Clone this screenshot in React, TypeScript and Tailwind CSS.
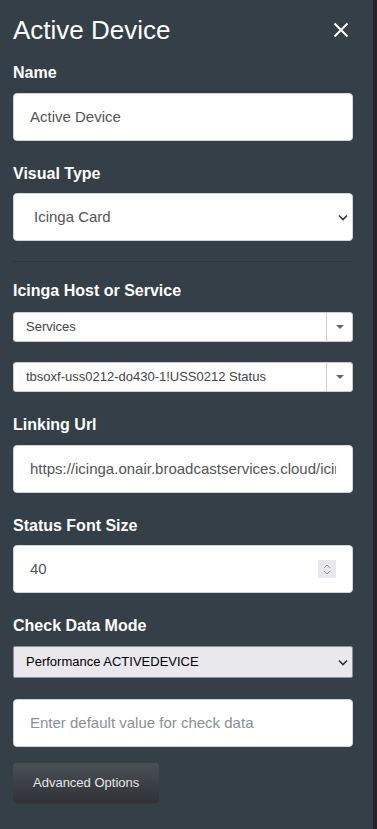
import React from 'react';

const font = { fontFamily: '"Liberation Sans", Arial, sans-serif' };

const Label: React.FC<{ children: React.ReactNode }> = ({ children }) => (
  <div className="text-[16px] font-bold text-white leading-[20px]">{children}</div>
);

const Chevron: React.FC = () => (
  <svg width="10" height="7" viewBox="0 0 10 7" className="shrink-0">
    <path d="M1 1.5l4 4 4-4" fill="none" stroke="#333" strokeWidth="1.6" />
  </svg>
);

const Select2: React.FC<{ value: string }> = ({ value }) => (
  <div className="flex h-[30px] bg-white rounded-[3px] border border-[#ccc]">
    <div className="flex-1 flex items-center pl-[12px] text-[13px] text-[#444]">{value}</div>
    <div className="w-[26px] border-l border-[#ccc] flex items-center justify-center">
      <span className="w-0 h-0 border-l-[4px] border-r-[4px] border-t-[4px] border-l-transparent border-r-transparent border-t-[#666]" />
    </div>
  </div>
);

const App: React.FC = () => {
  return (
    <div className="flex min-h-[829px] w-[377px] bg-[#343f47]" style={font}>
      <div className="w-[373px] pl-[13px] pr-[20px] pt-[14px] pb-[26px]">
        {/* Header */}
        <div className="flex items-center justify-between h-[32px]">
          <h1 className="text-[26px] text-white leading-[32px]">Active Device</h1>
          <svg width="16" height="16" viewBox="0 0 16 16" className="mr-[4px]">
            <path d="M1.5 1.5l13 13M14.5 1.5l-13 13" stroke="white" strokeWidth="2" />
          </svg>
        </div>

        <div className="mt-[17px]"><Label>Name</Label></div>
        <div className="mt-[10px] h-[48px] bg-white rounded-[4px] border border-[#ced4da] flex items-center pl-[16px] text-[15px] text-[#555]">
          Active Device
        </div>

        <div className="mt-[23px]"><Label>Visual Type</Label></div>
        <div className="mt-[9px] h-[48px] bg-white rounded-[4px] border border-[#ced4da] flex items-center pl-[20px] pr-[4px] text-[15px] text-[#555]">
          <span className="flex-1">Icinga Card</span>
          <Chevron />
        </div>

        <div className="mt-[20px] border-t border-[#2b353c]" />

        <div className="mt-[19px]"><Label>Icinga Host or Service</Label></div>
        <div className="mt-[11px]"><Select2 value="Services" /></div>
        <div className="mt-[20px]"><Select2 value="tbsoxf-uss0212-do430-1!USS0212 Status" /></div>

        <div className="mt-[23px]"><Label>Linking Url</Label></div>
        <div className="mt-[10px] h-[48px] bg-white rounded-[4px] border border-[#ced4da] flex items-center pl-[16px] pr-[16px] text-[15px] text-[#555]">
          <div className="overflow-hidden whitespace-nowrap">https://icinga.onair.broadcastservices.cloud/icinga</div>
        </div>

        <div className="mt-[23px]"><Label>Status Font Size</Label></div>
        <div className="mt-[9px] h-[48px] bg-white rounded-[4px] border border-[#ced4da] flex items-center pl-[16px] pr-[16px] text-[15px] text-[#555]">
          <span className="flex-1">40</span>
          <div className="w-[18px] h-[18px] bg-[#e8e8ee] flex flex-col items-center justify-center gap-[1px]">
            <svg width="8" height="5" viewBox="0 0 8 5"><path d="M1 4l3-3 3 3" fill="none" stroke="#999" strokeWidth="1" /></svg>
            <svg width="8" height="5" viewBox="0 0 8 5"><path d="M1 1l3 3 3-3" fill="none" stroke="#999" strokeWidth="1" /></svg>
          </div>
        </div>

        <div className="mt-[23px]"><Label>Check Data Mode</Label></div>
        <div className="mt-[10px] h-[32px] bg-[#e9e8ed] rounded-[2px] border border-[#8f8f9d] flex items-center pl-[12px] pr-[4px] text-[13px] text-black">
          <span className="flex-1">Performance ACTIVEDEVICE</span>
          <Chevron />
        </div>

        <div className="mt-[21px] h-[48px] bg-white rounded-[4px] border border-[#ced4da] flex items-center pl-[16px] text-[15px] text-[#8a8f95]">
          Enter default value for check data
        </div>

        <button className="mt-[16px] h-[40px] px-[20px] rounded-[4px] bg-gradient-to-b from-[#4b5058] to-[#2f3236] text-[13px] text-[#e6e6e6]">
          Advanced Options
        </button>
      </div>
      <div className="w-[4px] bg-[#222628]" />
    </div>
  );
};

export default App;
